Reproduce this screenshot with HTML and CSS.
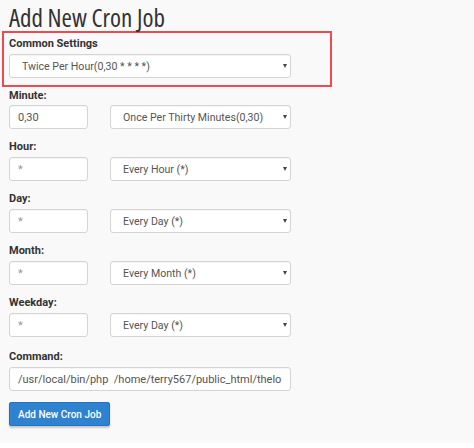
FILE: index.html
```html
<!DOCTYPE html>
<html lang="en">

<head>
    <meta charset="UTF-8">
    <meta name="viewport" content="width=device-width, initial-scale=1.0">
    <title>Cron Jobs</title>
    <link rel="stylesheet" href="styles.css">
</head>

<body>
    <div class="page">
        <h1 class="title">Add New Cron Job</h1>

        <div class="common">
            <label class="label">Common Settings</label>
            <div class="select wide">
                <select>
                    <option>Twice Per Hour(0,30 * * * *)</option>
                </select>
            </div>
        </div>

        <div class="field first">
            <label class="label">Minute:</label>
            <div class="pair">
                <input class="short" type="text" value="0,30">
                <div class="select">
                    <select><option>Once Per Thirty Minutes(0,30)</option></select>
                </div>
            </div>
        </div>

        <div class="field">
            <label class="label">Hour:</label>
            <div class="pair">
                <input class="short star" type="text" value="*">
                <div class="select">
                    <select><option>Every Hour (*)</option></select>
                </div>
            </div>
        </div>

        <div class="field">
            <label class="label">Day:</label>
            <div class="pair">
                <input class="short star" type="text" value="*">
                <div class="select">
                    <select><option>Every Day (*)</option></select>
                </div>
            </div>
        </div>

        <div class="field">
            <label class="label">Month:</label>
            <div class="pair">
                <input class="short star" type="text" value="*">
                <div class="select">
                    <select><option>Every Month (*)</option></select>
                </div>
            </div>
        </div>

        <div class="field">
            <label class="label">Weekday:</label>
            <div class="pair">
                <input class="short star" type="text" value="*">
                <div class="select">
                    <select><option>Every Day (*)</option></select>
                </div>
            </div>
        </div>

        <div class="field command-field">
            <label class="label">Command:</label>
            <input class="command" type="text" value="/usr/local/bin/php  /home/terry567/public_html/thelowcostcron.php">
        </div>

        <button class="btn" type="button">Add New Cron Job</button>
    </div>
</body>

</html>
```

FILE: styles.css
```css
body {
    margin: 0;
    background: #fff;
    font-family: Roboto, "Liberation Sans", sans-serif;
    color: #333;
}
.page {
    background: #f9f9f9;
    padding: 3px 0 17px 9px;
}
.title {
    margin: 0;
    font-family: "Open Sans", Roboto, sans-serif;
    font-stretch: 85%;
    font-size: 25px;
    line-height: 28px;
    font-weight: 400;
    color: #333;
}
.label {
    display: block;
    font-size: 11px;
    line-height: 15px;
    font-weight: 700;
    color: #333;
    margin-bottom: 3px;
}
.common {
    width: 330px;
    box-sizing: border-box;
    margin-left: -7px;
    padding: 3px 39px 7px 5px;
    border: 2px solid #ee4b4f;
}
.field {
    margin-top: 10px;
}
.field.first {
    margin-top: 1px;
}
.field.first .label {
    margin-bottom: 2px;
}
.command-field {
    margin-top: 12px;
}
.pair {
    display: flex;
    gap: 22px;
    width: 282px;
}
input,
select {
    height: 24px;
    box-sizing: border-box;
    border: 1px solid #d4d4d4;
    border-radius: 3px;
    background: #fff;
    font-family: inherit;
    font-size: 11px;
    color: #555;
    box-shadow: inset 0 1px 1px rgba(0, 0, 0, .04);
    outline: none;
}
input {
    padding: 0 8px;
}
.short {
    width: 79px;
}
.star {
    color: #999;
}
.command {
    width: 282px;
}
.select {
    position: relative;
    flex: 1;
}
.select.wide {
    width: 282px;
}
.select select {
    appearance: none;
    -webkit-appearance: none;
    width: 100%;
    padding: 0 16px 0 12px;
    font-size: 10.6px;
}
/* little caret on the right of each dropdown */
.select::after {
    content: "";
    position: absolute;
    right: 4px;
    top: 10px;
    border-left: 2px solid transparent;
    border-right: 2px solid transparent;
    border-top: 4px solid #444;
}
.btn {
    margin-top: 11px;
    height: 24px;
    padding: 0 8px;
    border: 1px solid #2772bd;
    border-radius: 2px;
    background: #2e82d0;
    color: #fff;
    font-family: inherit;
    font-size: 10px;
    font-weight: 500;
    box-shadow: 0 2px 2px rgba(0, 0, 0, .2);
}
```
